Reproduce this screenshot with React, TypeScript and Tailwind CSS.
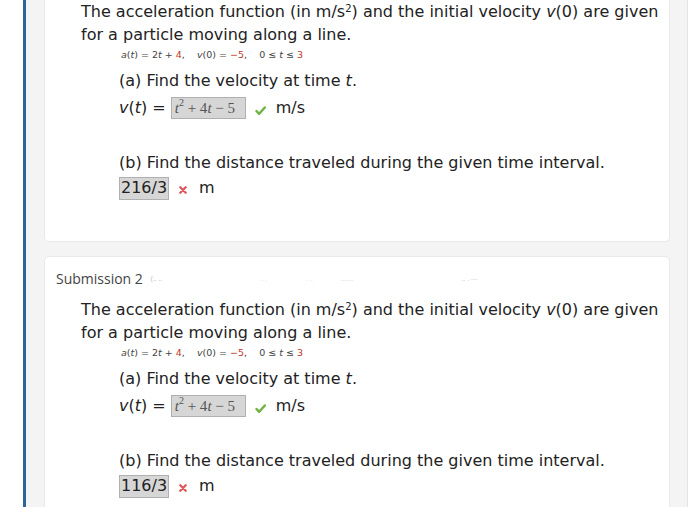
import React from "react";

const Check = () => (
  <svg width="11" height="9" viewBox="0 0 11 9" className="ml-[9px] mr-[10px] mt-[4px]">
    <path d="M1.5 5 L4.2 7.8 L9.8 1.5" stroke="#6cb33f" strokeWidth="2.4" fill="none" strokeLinecap="round" strokeLinejoin="round" />
  </svg>
);

const Cross = () => (
  <svg width="8" height="8" viewBox="0 0 8 8" className="ml-[10px] mr-[12px] mt-[3px]">
    <path d="M1.3 1.3 L6.7 6.7 M6.7 1.3 L1.3 6.7" stroke="#e0575b" strokeWidth="2.3" strokeLinecap="round" />
  </svg>
);

const Question: React.FC<{ answer: string }> = ({ answer }) => (
  <div className="pl-[36px] text-[#222] text-[16px]" style={{ fontFamily: '"DejaVu Sans", Verdana, sans-serif' }}>
    <p className="leading-[23px]">
      The acceleration function (in m/s<sup className="text-[10px]">2</sup>) and the initial velocity{" "}
      <i>v</i>(0) are given
      <br />
      for a particle moving along a line.
    </p>
    <div className="pl-[40px] h-[18px] leading-[18px] text-[9.5px] text-[#444] whitespace-pre">
      <i>a</i>(<i>t</i>) = 2<i>t</i> + <span className="text-[#c0392b]">4</span>,{"    "}
      <i>v</i>(0) = <span className="text-[#c0392b]">−5</span>,{"    "}0 ≤ <i>t</i> ≤{" "}
      <span className="text-[#c0392b]">3</span>
    </div>
    <div className="pl-[38px]">
      <p className="mt-[5px] leading-[24px]">
        (a) Find the velocity at time <i>t</i>.
      </p>
      <div className="mt-[2px] h-[26px] flex items-center">
        <span>
          <i>v</i>(<i>t</i>) =
        </span>
        <span
          className="ml-[5px] h-[22px] w-[75px] bg-[#d6d6d6] border border-[#b0b0b0] pl-[3px] flex items-center text-[15px] text-[#555]"
          style={{ fontFamily: '"Liberation Serif", "Times New Roman", serif' }}
        >
          <i>t</i>
          <sup className="text-[10px]">2</sup>&nbsp;+ 4<i>t</i>&nbsp;− 5
        </span>
        <Check />
        <span>m/s</span>
      </div>
      <p className="mt-[30px] leading-[24px]">(b) Find the distance traveled during the given time interval.</p>
      <div className="h-[26px] flex items-center">
        <span className="h-[23px] px-[1px] bg-[#d6d6d6] border border-[#b0b0b0] flex items-center">{answer}</span>
        <Cross />
        <span>m</span>
      </div>
    </div>
  </div>
);

export default function App() {
  return (
    <div className="flex w-[700px] h-[507px] overflow-hidden bg-white">
      <div className="w-[23px]" />
      <div className="w-[3px] bg-[#2f6496]" />
      <div className="flex-1 bg-[#f4f4f4] pl-[18px] pr-[17px] flex flex-col gap-[14px]">
        <div className="bg-white border border-t-0 border-[#e9e9e9] rounded-b-[5px] pb-[40px] shrink-0">
          <Question answer="216/3" />
        </div>
        <div className="bg-white border border-[#e9e9e9] rounded-[5px] pt-[12px] pb-[40px] shrink-0">
          <div
            className="pl-[11px] h-[20px] leading-[20px] text-[14px] text-[#444] flex items-center gap-[8px]"
            style={{ fontFamily: '"Open Sans", "Noto Sans", sans-serif' }}
          >
            <span>Submission 2</span>
            <span className="text-[7px] text-[#bbb]">(.. ..</span>
            <span className="text-[7px] text-[#e4e4e4] ml-[90px]">.. .</span>
            <span className="text-[7px] text-[#e4e4e4] ml-[30px]">. ..</span>
            <span className="text-[7px] text-[#d8d8d8] ml-[20px]">.......</span>
            <span className="text-[7px] text-[#cfcfcf] ml-[100px]">.. . ---</span>
          </div>
          <div className="mt-[9px]">
            <Question answer="116/3" />
          </div>
        </div>
      </div>
      <div className="w-px bg-[#e4e4e4]" />
      <div className="w-[12px] bg-white" />
    </div>
  );
}
